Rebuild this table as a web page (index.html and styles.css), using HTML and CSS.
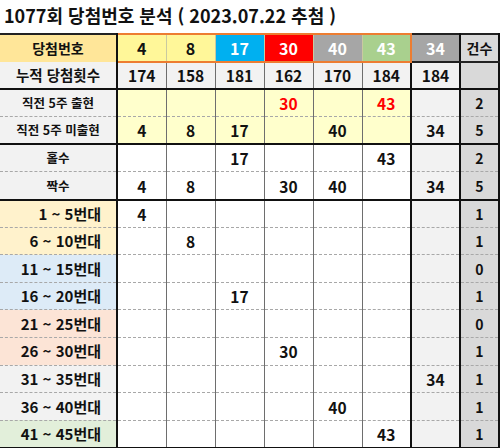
FILE: index.html
```html
<!DOCTYPE html>
<html lang="ko">
<head>
<meta charset="utf-8">
<link rel="stylesheet" href="styles.css">
</head>
<body>
<h1 class="title">1077회 당첨번호 분석 ( 2023.07.22 추첨 )</h1>
<table class="grid">
  <colgroup>
    <col class="c-label"><col class="c-n"><col class="c-n"><col class="c-n"><col class="c-n"><col class="c-n"><col class="c-n"><col class="c-bonus"><col class="c-count">
  </colgroup>
  <tbody>
    <tr class="r-head">
      <th class="lbl lbl-head">당첨번호</th>
      <td class="h-yel h-first">4</td>
      <td class="h-yel">8</td>
      <td class="h-blue">17</td>
      <td class="h-red">30</td>
      <td class="h-gray">40</td>
      <td class="h-green h-last">43</td>
      <td class="h-bonus">34</td>
      <td class="cnt cnt-head">건수</td>
    </tr>
    <tr class="r-acc grp-end">
      <th class="lbl lbl-gray big">누적 당첨횟수</th>
      <td class="acc">174</td><td class="acc">158</td><td class="acc">181</td><td class="acc">162</td><td class="acc">170</td><td class="acc">184</td>
      <td class="bonus">184</td>
      <td class="cnt"></td>
    </tr>
    <tr class="dash">
      <th class="lbl lbl-gray small">직전 5주 출현</th>
      <td class="yel"></td><td class="yel"></td><td class="yel"></td><td class="yel red">30</td><td class="yel"></td><td class="yel red">43</td>
      <td class="bonus"></td>
      <td class="cnt">2</td>
    </tr>
    <tr class="grp-end">
      <th class="lbl lbl-gray small">직전 5주 미출현</th>
      <td class="yel">4</td><td class="yel">8</td><td class="yel">17</td><td class="yel"></td><td class="yel">40</td><td class="yel"></td>
      <td class="bonus">34</td>
      <td class="cnt">5</td>
    </tr>
    <tr class="dash">
      <th class="lbl lbl-gray small">홀수</th>
      <td></td><td></td><td>17</td><td></td><td></td><td>43</td>
      <td class="bonus"></td>
      <td class="cnt">2</td>
    </tr>
    <tr class="grp-end">
      <th class="lbl lbl-gray small">짝수</th>
      <td>4</td><td>8</td><td></td><td>30</td><td>40</td><td></td>
      <td class="bonus">34</td>
      <td class="cnt">5</td>
    </tr>
    <tr class="dash">
      <th class="lbl rng rng-a">1 ~ 5번대</th>
      <td>4</td><td></td><td></td><td></td><td></td><td></td><td class="bonus"></td><td class="cnt">1</td>
    </tr>
    <tr class="dash">
      <th class="lbl rng rng-a">6 ~ 10번대</th>
      <td></td><td>8</td><td></td><td></td><td></td><td></td><td class="bonus"></td><td class="cnt">1</td>
    </tr>
    <tr class="dash">
      <th class="lbl rng rng-b">11 ~ 15번대</th>
      <td></td><td></td><td></td><td></td><td></td><td></td><td class="bonus"></td><td class="cnt">0</td>
    </tr>
    <tr class="dash">
      <th class="lbl rng rng-b">16 ~ 20번대</th>
      <td></td><td></td><td>17</td><td></td><td></td><td></td><td class="bonus"></td><td class="cnt">1</td>
    </tr>
    <tr class="dash">
      <th class="lbl rng rng-c">21 ~ 25번대</th>
      <td></td><td></td><td></td><td></td><td></td><td></td><td class="bonus"></td><td class="cnt">0</td>
    </tr>
    <tr class="dash">
      <th class="lbl rng rng-c">26 ~ 30번대</th>
      <td></td><td></td><td></td><td>30</td><td></td><td></td><td class="bonus"></td><td class="cnt">1</td>
    </tr>
    <tr class="dash">
      <th class="lbl rng rng-d">31 ~ 35번대</th>
      <td></td><td></td><td></td><td></td><td></td><td></td><td class="bonus">34</td><td class="cnt">1</td>
    </tr>
    <tr class="dash">
      <th class="lbl rng rng-d">36 ~ 40번대</th>
      <td></td><td></td><td></td><td></td><td>40</td><td></td><td class="bonus"></td><td class="cnt">1</td>
    </tr>
    <tr class="last">
      <th class="lbl rng rng-e">41 ~ 45번대</th>
      <td></td><td></td><td></td><td></td><td></td><td>43</td><td class="bonus"></td><td class="cnt">1</td>
    </tr>
  </tbody>
</table>
</body>
</html>
```

FILE: styles.css
```css
html, body {
  margin: 0;
  padding: 0;
  background: #ffffff;
}
body {
  font-family: "Noto Sans CJK KR", "Noto Sans", sans-serif;
  color: #111;
}
.title {
  margin: 0;
  height: 33px;
  padding-left: 4px;
  font-size: 18px;
  line-height: 31px;
  font-weight: 700;
  color: #111;
}
.grid {
  border-collapse: collapse;
  table-layout: fixed;
  width: 498px;
}
.c-label { width: 117px; }
.c-n { width: 49px; }
.c-bonus { width: 49px; }
.c-count { width: 39px; }

.grid tr { height: 27.6px; }
.grid th, .grid td {
  padding: 0;
  text-align: center;
  vertical-align: middle;
  font-size: 15.5px;
  font-weight: 600;
  line-height: 20px;
  border-left: 1px solid #6e6e6e;
  border-right: 1px solid #6e6e6e;
  background: #ffffff;
  color: #111;
}
.grid tr.dash th, .grid tr.dash td {
  border-bottom: 1px dashed #a8a8a8;
}
.grid tr.grp-end th, .grid tr.grp-end td {
  border-bottom: 2px solid #111;
}
.grid tr.last th, .grid tr.last td {
  border-bottom: 2px solid #111;
}

/* label column */
.lbl {
  font-weight: 600;
  font-size: 12px;
  border-left: none;
  border-right: 2px solid #111 !important;
  background: #f2f2f2;
}
.grid .lbl { border-left: none; font-size: 12.5px; }
.grid .lbl.big { font-size: 14.5px; }
.grid .lbl-head {
  background: #ffe699;
  font-size: 14px;
  border-top: 2px solid #222;
}
.lbl-gray { background: #f2f2f2 !important; }
.grid .rng {
  text-align: right;
  padding-right: 15px;
  font-size: 15px;
}
.rng-a { background: #fff2cc !important; }
.rng-b { background: #ddebf7 !important; }
.rng-c { background: #fce4d6 !important; }
.rng-d { background: #f2f2f2 !important; }
.rng-e { background: #e2efda !important; }

/* header row */
.r-head td {
  font-weight: 700;
  font-size: 16px;
  border-top: 2px solid #ed7d31;
  border-bottom: 2px solid #ed7d31;
  border-right: 1px solid #c9c9a0;
}
.r-head .h-first { border-left: 2px solid #ed7d31; }
.r-head .h-last { border-right: 2px solid #ed7d31; }
.h-yel { background: #fff799 !important; color: #111 !important; }
.h-blue { background: #00b0f0 !important; color: #fff !important; }
.h-red { background: #ff0000 !important; color: #fff !important; }
.h-gray { background: #a6a6a6 !important; color: #fff !important; }
.h-green { background: #a9d08e !important; color: #fff !important; }
.r-head .h-bonus {
  background: #a6a6a6;
  color: #fff;
  border-top: 2px solid #222;
  border-bottom: 2px solid #222;
  border-right: 2px solid #111;
}
.r-head .cnt-head {
  background: #d9d9d9;
  color: #111;
  font-size: 15px;
  border-top: 2px solid #222;
  border-bottom: 2px solid #222;
}

/* body cells */
.acc { background: #f2f2f2 !important; }
.yel { background: #ffffcc !important; }
.red { color: #ff0000 !important; }
.grid .bonus {
  background: #f2f2f2;
  border-left: 2px solid #111;
  border-right: 2px solid #111;
}
.grid .cnt {
  background: #d9d9d9;
  font-size: 14px;
  border-right: 2px solid #111;
}
```
